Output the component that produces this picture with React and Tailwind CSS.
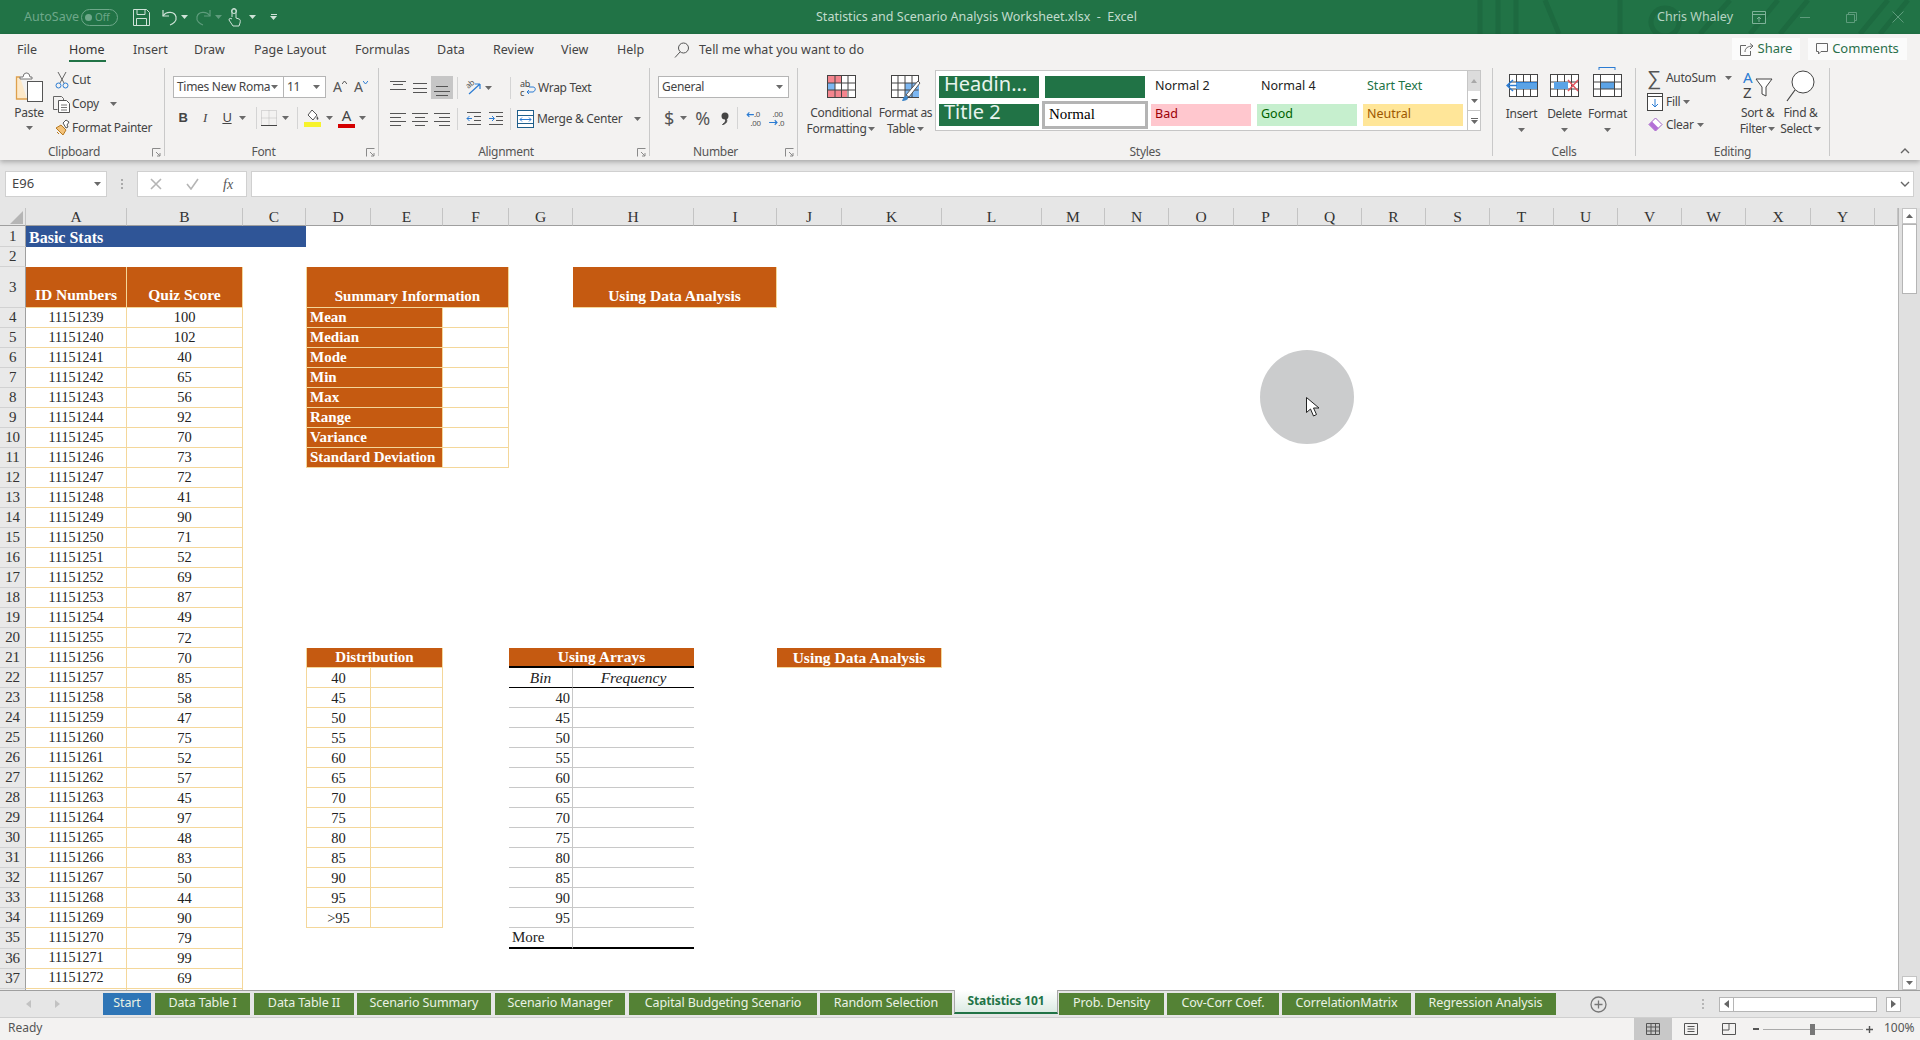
import React from 'react';

const Caret = ({ c = '#6a6a6a' }) => (
  <svg width="7" height="4" viewBox="0 0 7 4" className="shrink-0"><path d="M0 0h7L3.5 4z" fill={c} /></svg>
);
const Launcher = () => (
  <svg width="9" height="9" viewBox="0 0 9 9" className="absolute right-[3px] bottom-[3px]">
    <path d="M.5 8.5v-8h8M4 4l4 4M8 5v3H5" fill="none" stroke="#8a8a8a" />
  </svg>
);
const Sep = () => <div className="w-px h-[88px] mt-[2px] bg-[#c9c9c9] shrink-0" />;
const MiniSep = () => <div className="w-px h-[22px] bg-[#d4d4d4] shrink-0" />;

function Group({ cls, label, launcher, children }) {
  return (
    <div className={`relative flex flex-col shrink-0 ${cls}`}>
      <div className="h-[78px]">{children}</div>
      <div className={`h-[16px] leading-[16px] text-center text-[#555] ${launcher ? 'pr-[16px]' : ''}`}>{label}</div>
      {launcher && <Launcher />}
    </div>
  );
}

const Lines = ({ ys, xs }) => (
  <svg width="18" height="18" viewBox="0 0 18 18">
    {ys.map((y, i) => <path key={i} d={`M${xs[i][0]} ${y + .5}H${xs[i][1]}`} stroke="#555" fill="none" />)}
  </svg>
);

const IconCut = () => (
  <svg width="14" height="17" viewBox="0 0 14 17"><path d="M3 0l6 11M11 0L5 11" stroke="#666" fill="none" /><circle cx="3.5" cy="13.5" r="2.5" fill="none" stroke="#2b7cd3" /><circle cx="10.5" cy="13.5" r="2.5" fill="none" stroke="#2b7cd3" /></svg>
);
const IconCopy = () => (
  <svg width="18" height="18" viewBox="0 0 18 18"><path d="M.5 1.5h8l2 2v2M.5 1.5v13h4" fill="none" stroke="#666" /><path d="M5.5 5.5h8l3 3v9h-11z" fill="#fff" stroke="#555" /><path d="M8 10h6M8 12.5h6M8 15h6" stroke="#777" /></svg>
);
const IconBrush = () => (
  <svg width="18" height="18" viewBox="0 0 18 18"><path d="M8 6l5 5-3 5-7-7z" fill="#f3c27a" stroke="#b7791f" /><path d="M10 4l3-3 3 2-2 3 1 2-2 1z" fill="#fff" stroke="#555" /><path d="M5 11l3 3M4 13l2 2" stroke="#b7791f" /></svg>
);
const IconOrient = () => (
  <svg width="18" height="18" viewBox="0 0 18 18" className="overflow-visible"><text x="1" y="8" fontSize="8" fill="#555" transform="rotate(-40 5 6)">ab</text><path d="M4 15L15 5M15 5h-5M15 5v5" stroke="#2b7cd3" fill="none" strokeWidth="1.2" /></svg>
);
const IconIndent = ({ right }) => (
  <svg width="16" height="16" viewBox="0 0 16 16">
    <path d="M1 1.5h14M8 5.5h7M8 9.5h7M1 13.5h14" stroke="#555" />
    {right ? <path d="M1 7.5h5M4 5l2.5 2.5L4 10" stroke="#2b7cd3" fill="none" /> : <path d="M6 7.5H1M3.5 5L1 7.5 3.5 10" stroke="#2b7cd3" fill="none" />}
  </svg>
);
const IconWrap = () => (
  <svg width="16" height="18" viewBox="0 0 16 18" className="overflow-visible"><text x="0" y="8" fontSize="9" fill="#444" fontFamily="Noto Sans">ab</text><text x="0" y="17" fontSize="9" fill="#444" fontFamily="Noto Sans">c</text><path d="M7 13h6c3-1 3-5 0-5H9M7 13l2-2M7 13l2 2" stroke="#2b7cd3" fill="none" /></svg>
);
const IconMerge = () => (
  <svg width="17" height="18" viewBox="0 0 17 18"><rect x=".5" y=".5" width="16" height="17" fill="#fff" stroke="#1f5f8b" /><path d="M.5 5.5h16M.5 13.5h16" stroke="#1f5f8b" /><path d="M3 9.5h11M3 9.5l2-2M3 9.5l2 2M14 9.5l-2-2M14 9.5l-2 2" stroke="#2b7cd3" fill="none" /></svg>
);
const IconBorders = () => (
  <svg width="16" height="16" viewBox="0 0 16 16"><path d="M.5.5h15v15H.5zM8 .5v15M.5 8h15" stroke="#bbb" fill="none" strokeDasharray="1 1" /><path d="M0 15.5h16" stroke="#444" /></svg>
);
const IconFill = () => (
  <svg width="17" height="18" viewBox="0 0 17 18"><path d="M8 1l5 5-4 5-5-5z" fill="#fff" stroke="#555" /><path d="M13 7c1 1.5 2 2.5 1 3.5s-2-1-1-3.5z" fill="#555" /><rect x="0" y="13" width="17" height="5" fill="#f7f32c" /></svg>
);
const IconGrow = ({ down }) => (
  <div className="flex w-[14px] text-[14px] leading-none text-[#555] shrink-0 items-start">
    A<svg width="5" height="4" viewBox="0 0 5 4" className="mt-[1px]"><path d={down ? 'M0 0l2.5 3L5 0' : 'M0 3l2.5-3L5 3'} fill="none" stroke={down ? '#2b7cd3' : '#555'} /></svg>
  </div>
);
const IconCF = () => (
  <svg width="29" height="23" viewBox="0 0 29 23"><rect x=".5" y=".5" width="28" height="22" fill="#fff" stroke="#444" /><path d="M1 1h13v7H1zM1 15h19v7H1z" fill="#f4858e" /><path d="M1 8h7v7H1z" fill="#7cb7f2" /><path d="M8 .5v22M14.5.5v22M21 .5v22M.5 8h28M.5 15h28" stroke="#444" /></svg>
);
const IconFT = () => (
  <svg width="30" height="30" viewBox="0 0 30 30"><rect x=".5" y=".5" width="27" height="22" fill="#fff" stroke="#444" /><path d="M14 8h14v14H14z" fill="#7cb7f2" /><path d="M7 .5v22M14 .5v22M21 .5v22M.5 8h27M.5 15h27" stroke="#444" /><path d="M27 6l2 2-11 14-3-2z" fill="#fff" stroke="#555" /><path d="M15 21c-2 0-3 2-4 5 3 0 6-1 6-3z" fill="#3f87c9" /></svg>
);
const IconInsert = () => (
  <svg width="32" height="23" viewBox="0 0 32 23"><rect x="3.500" y=".5" width="28" height="22" fill="#fff" stroke="#444" /><path d="M3.500 8h28M3.500 15h28M10.500.5v22M17.500.5v22M24.500.5v22" stroke="#444" /><path d="M10 8h21v7H10z" fill="#5ba3e6" /><path d="M11 11.500H1M7 6L1 11.500 7 17" fill="none" stroke="#2b7cd3" strokeWidth="1.5" /><path d="M10 8.500h21" stroke="#2b7cd3" /></svg>
);
const IconDelete = () => (
  <svg width="29" height="23" viewBox="0 0 29 23"><rect x=".5" y=".5" width="28" height="22" fill="#fff" stroke="#444" /><path d="M.5 8h28M.5 15h28M7.500.5v22M14.500.5v22M21.500.5v22" stroke="#444" /><path d="M4 8h14v7H4z" fill="#5ba3e6" /><path d="M18 6l10 11M28 6L18 17" stroke="#e2505a" strokeWidth="1.4" /></svg>
);
const IconFormat = () => (
  <svg width="29" height="30" viewBox="0 0 29 30"><path d="M6 .5h16M6 0v3M22 0v3" stroke="#2b7cd3" /><g transform="translate(0 7)"><rect x=".5" y=".5" width="28" height="22" fill="#fff" stroke="#444" /><path d="M7 8h14v7H7z" fill="#5ba3e6" /><path d="M.5 8h28M.5 15h28M7.500.5v22M21.500.5v22" stroke="#444" /></g></svg>
);
const IconFillDown = () => (
  <svg width="16" height="18" viewBox="0 0 16 18"><rect x=".5" y=".5" width="15" height="17" fill="#fff" stroke="#444" /><path d="M.5 3.500h15" stroke="#444" /><path d="M8 6v8M5 11l3 3 3-3" stroke="#2b7cd3" fill="none" /></svg>
);
const IconClear = () => (
  <svg width="16" height="16" viewBox="0 0 16 16"><path d="M8.500 1L15 7.500 8.500 14 2 7.500z" fill="#fff" stroke="#a05fc5" /><path d="M5 4.500L11.500 11 8.500 14 2 7.500z" fill="#b36fd6" /></svg>
);
const IconSort = () => (
  <svg width="30" height="30" viewBox="0 0 30 30" className="overflow-visible"><text x="0" y="13" fontSize="15" fill="#2b7cd3" fontFamily="Noto Sans">A</text><text x="0" y="28" fontSize="15" fill="#444" fontFamily="Noto Sans">Z</text><path d="M13 9h16l-6 8v9l-4-2v-7z" fill="#fff" stroke="#444" /></svg>
);
const IconFind = () => (
  <svg width="30" height="32" viewBox="0 0 30 32"><circle cx="17" cy="12" r="11" fill="#fff" stroke="#444" /><path d="M9 20L1 31" stroke="#444" strokeWidth="1.2" /></svg>
);
const IconSearch = ({ s = 16 }) => (
  <svg width={s} height={s} viewBox="0 0 16 16"><circle cx="9.500" cy="6" r="5" fill="none" stroke="#555" /><path d="M6 10l-5 5.500" stroke="#555" /></svg>
);

function Clipboard() {
  return (
    <Group cls="w-[164px]" label="Clipboard" launcher>
      <div className="flex pl-[12px]">
        <div className="w-[34px] flex flex-col items-center pt-[6px]">
          <svg width="28" height="30" viewBox="0 0 28 30"><path d="M5 5H1.500v22H12" fill="#fde9c9" stroke="#dea04c" strokeWidth="1.3" /><path d="M5 5h3l1-3 2-1h1l2 1 1 3h2v2H5z" fill="#fff" stroke="#777" /><rect x="12.500" y="9.500" width="15" height="20" fill="#fff" stroke="#555" /></svg>
          <div className="h-[18px] leading-[18px] mt-[2px]">Paste</div>
          <div className="mt-[4px]"><Caret /></div>
        </div>
        <div className="ml-[7px] pt-[2px] flex flex-col">
          <div className="h-[24px] flex items-center"><div className="w-[19px] pl-[2px]"><IconCut /></div>Cut</div>
          <div className="h-[24px] flex items-center"><div className="w-[19px]"><IconCopy /></div>Copy<div className="ml-[11px]"><Caret /></div></div>
          <div className="h-[24px] flex items-center"><div className="w-[19px]"><IconBrush /></div>Format Painter</div>
        </div>
      </div>
    </Group>
  );
}

function Font() {
  return (
    <Group cls="w-[213px]" label="Font" launcher>
      <div className="flex items-center pl-[8px] pt-[10px]">
        <div className="w-[111px] h-[22px] bg-white border border-[#b5b5b5] flex items-center justify-between pl-[3px] pr-[5px] whitespace-nowrap">Times New Roma<Caret /></div>
        <div className="w-[43px] h-[22px] -ml-px bg-white border border-[#b5b5b5] flex items-center justify-between pl-[3px] pr-[5px]">11<Caret /></div>
        <div className="ml-[7px]"><IconGrow /></div>
        <div className="ml-[7px]"><IconGrow down /></div>
      </div>
      <div className="flex items-center pl-[7px] mt-[8px] h-[24px]">
        <div className="w-[22px] text-center font-bold text-[13px] [font-family:'Liberation_Sans',sans-serif] text-[#444]">B</div>
        <div className="w-[22px] text-center italic text-[13px] [font-family:'Liberation_Serif',serif]">I</div>
        <div className="w-[22px] text-center underline text-[13px]">U</div>
        <div className="ml-[1px]"><Caret /></div>
        <div className="ml-[10px]"><MiniSep /></div>
        <div className="ml-[4px]"><IconBorders /></div>
        <div className="ml-[5px]"><Caret /></div>
        <div className="ml-[8px]"><MiniSep /></div>
        <div className="ml-[6px]"><IconFill /></div>
        <div className="ml-[5px]"><Caret /></div>
        <div className="ml-[5px] w-[17px] flex flex-col items-center leading-none text-[15px]">A<div className="w-[17px] h-[4px] mt-px bg-[#d40000]" /></div>
        <div className="ml-[4px]"><Caret /></div>
      </div>
    </Group>
  );
}

function Alignment() {
  return (
    <Group cls="w-[270px]" label="Alignment" launcher>
      <div className="flex items-center pl-[8px] pt-[10px] h-[33px]">
        <div className="w-[22px] h-[23px] flex items-center justify-center"><Lines ys={[2, 5, 10]} xs={[[1, 17], [4, 14], [1, 17]]} /></div>
        <div className="w-[22px] h-[23px] flex items-center justify-center"><Lines ys={[4, 9, 13]} xs={[[2, 16], [2, 16], [2, 16]]} /></div>
        <div className="w-[22px] h-[23px] flex items-center justify-center bg-[#c6c6c6]"><Lines ys={[7, 12, 16]} xs={[[3, 15], [1, 17], [3, 15]]} /></div>
        <div className="ml-[4px]"><MiniSep /></div>
        <div className="ml-[7px]"><IconOrient /></div>
        <div className="ml-[2px]"><Caret /></div>
        <div className="ml-[18px]"><MiniSep /></div>
        <div className="ml-[9px]"><IconWrap /></div>
        <div className="ml-[2px] whitespace-nowrap">Wrap Text</div>
      </div>
      <div className="flex items-center pl-[8px] mt-[8px] h-[24px]">
        <div className="w-[22px] flex justify-center"><Lines ys={[3, 7, 11, 15]} xs={[[1, 17], [1, 12], [1, 17], [1, 12]]} /></div>
        <div className="w-[22px] flex justify-center"><Lines ys={[3, 7, 11, 15]} xs={[[1, 17], [4, 14], [1, 17], [4, 14]]} /></div>
        <div className="w-[22px] flex justify-center"><Lines ys={[3, 7, 11, 15]} xs={[[1, 17], [6, 17], [1, 17], [6, 17]]} /></div>
        <div className="ml-[4px]"><MiniSep /></div>
        <div className="ml-[8px]"><IconIndent /></div>
        <div className="ml-[6px]"><IconIndent right /></div>
        <div className="ml-[6px]"><MiniSep /></div>
        <div className="ml-[6px]"><IconMerge /></div>
        <div className="ml-[3px] whitespace-nowrap">Merge &amp; Center</div>
        <div className="ml-[12px]"><Caret /></div>
      </div>
    </Group>
  );
}

function NumberGroup() {
  return (
    <Group cls="w-[147px]" label="Number" launcher>
      <div className="pl-[8px] pt-[10px]">
        <div className="w-[131px] h-[22px] bg-white border border-[#b5b5b5] flex items-center justify-between pl-[3px] pr-[5px]">General<Caret /></div>
      </div>
      <div className="flex items-center pl-[12px] mt-[8px] h-[24px] text-[#555]">
        <div className="text-[18px] w-[14px] text-center">$</div>
        <div className="ml-[4px]"><Caret /></div>
        <div className="ml-[6px] text-[18px] w-[19px] text-center">%</div>
        <div className="ml-[6px] w-[14px] flex justify-center">
          <svg width="8" height="13" viewBox="0 0 8 13"><circle cx="4" cy="4" r="3.500" fill="#444" /><path d="M5 6.500C7 9 5 12 1.500 12.500 4 11 5 9.500 4.500 7z" fill="#444" stroke="#444" /></svg>
        </div>
        <div className="ml-[5px]"><MiniSep /></div>
        <div className="ml-[8px]">
          <svg width="18" height="18" viewBox="0 0 16 16"><text x="7" y="7" fontSize="7" fill="#555">.0</text><text x="4" y="15" fontSize="7" fill="#555">.00</text><path d="M7 5H1M3 3L1 5l2 2" stroke="#2b7cd3" fill="none" /></svg>
        </div>
        <div className="ml-[4px]">
          <svg width="18" height="18" viewBox="0 0 16 16"><text x="4" y="7" fontSize="7" fill="#555">.00</text><text x="9" y="15" fontSize="7" fill="#555">.0</text><path d="M1 12h7M6 10l2 2-2 2" stroke="#2b7cd3" fill="none" /></svg>
        </div>
      </div>
    </Group>
  );
}

const StyleCell = ({ cls, children }) => (
  <div className={`h-[22px] w-[100px] flex items-center pl-[4px] overflow-hidden whitespace-nowrap leading-none tracking-normal ${cls}`}>{children}</div>
);

function Styles() {
  return (
    <Group cls="w-[694px]" label="Styles">
      <div className="flex">
        <div className="w-[137px] flex pl-[9px] pt-[9px]">
          <div className="w-[68px] flex flex-col items-center text-center leading-[16px]">
            <div className="mb-[7px]"><IconCF /></div>
            <div className="whitespace-nowrap">Conditional</div>
            <div className="flex items-center gap-[2px] whitespace-nowrap">Formatting<Caret /></div>
          </div>
          <div className="w-[60px] ml-px flex flex-col items-center text-center leading-[16px]">
            <div className="h-[30px]"><IconFT /></div>
            <div className="whitespace-nowrap">Format as</div>
            <div className="flex items-center gap-[2px] whitespace-nowrap">Table<Caret /></div>
          </div>
        </div>
        <div className="mt-[4px] h-[61px] w-[546px] bg-white border border-[#c6c6c6] flex">
          <div className="w-[532px] pl-[3px] pt-[5px] flex flex-col gap-[6px]">
            <div className="flex gap-[6px]">
              <StyleCell cls="bg-[#217346] text-[#e8f3ed] text-[20px] !pl-[5px] pb-[7px]">Headin...</StyleCell>
              <StyleCell cls="bg-[#217346]" />
              <StyleCell cls="text-[#222] text-[12.5px] pb-[1px]">Normal 2</StyleCell>
              <StyleCell cls="text-[#222] text-[12.5px] pb-[1px]">Normal 4</StyleCell>
              <StyleCell cls="text-[#217346] text-[12.5px] pb-[1px]">Start Text</StyleCell>
            </div>
            <div className="flex gap-[6px]">
              <StyleCell cls="bg-[#217346] text-[#e8f3ed] text-[20px] !pl-[5px] pb-[6px]">Title 2</StyleCell>
              <StyleCell cls="bg-white outline-[3px] outline-[#b4b4b4] text-black text-[15px] pb-[1px] [font-family:'Liberation_Serif',serif]">Normal</StyleCell>
              <StyleCell cls="bg-[#ffc7ce] text-[#9c0006] text-[12.5px] pb-[1px]">Bad</StyleCell>
              <StyleCell cls="bg-[#c6efce] text-[#006100] text-[12.5px] pb-[1px]">Good</StyleCell>
              <StyleCell cls="bg-[#ffe699] text-[#9c5700] text-[12.5px] pb-[1px]">Neutral</StyleCell>
            </div>
          </div>
          <div className="w-[13px] flex flex-col border-l border-[#c6c6c6]">
            <div className="h-[20px] bg-[#dcdcdc] flex items-center justify-center"><svg width="6" height="4" viewBox="0 0 6 4"><path d="M0 4l3-4 3 4z" fill="#a8a8a8" /></svg></div>
            <div className="h-[20px] border-b border-[#c6c6c6] flex items-center justify-center"><Caret /></div>
            <div className="h-[19px] flex flex-col items-center justify-center"><div className="w-[7px] h-px bg-[#666] mb-[1px]" /><Caret /></div>
          </div>
        </div>
      </div>
    </Group>
  );
}

const CellBtn = ({ icon, label, cls }) => (
  <div className={`w-[43px] flex flex-col items-center ${cls}`}>
    <div className="h-[30px] flex items-end">{icon}</div>
    <div className="h-[16px] leading-[16px] mt-[9px]">{label}</div>
    <div className="mt-[6px]"><Caret /></div>
  </div>
);

function Cells() {
  return (
    <Group cls="w-[142px]" label="Cells">
      <div className="flex pl-[7px] pt-[1px]">
        <CellBtn label="Insert" icon={<IconInsert />} />
        <CellBtn label="Delete" icon={<IconDelete />} />
        <CellBtn label="Format" icon={<IconFormat />} />
      </div>
    </Group>
  );
}

function Editing() {
  return (
    <Group cls="w-[193px]" label="Editing">
      <div className="flex">
        <div className="w-[100px] pl-[11px] flex flex-col">
          <div className="h-[24px] flex items-center whitespace-nowrap"><div className="w-[19px] text-[20px] leading-none text-[#555]">∑</div>AutoSum<div className="ml-[9px]"><Caret /></div></div>
          <div className="h-[23px] flex items-center"><div className="w-[19px]"><IconFillDown /></div>Fill<div className="ml-[3px]"><Caret /></div></div>
          <div className="h-[23px] flex items-center"><div className="w-[19px]"><IconClear /></div>Clear<div className="ml-[3px]"><Caret /></div></div>
        </div>
        <div className="w-[43px] flex flex-col items-center pt-[4px] leading-[16px]">
          <div className="h-[34px]"><IconSort /></div>
          <div className="mt-[1px] whitespace-nowrap">Sort &amp;</div>
          <div className="flex items-center gap-[2px] whitespace-nowrap">Filter<Caret /></div>
        </div>
        <div className="w-[43px] flex flex-col items-center pt-[4px] leading-[16px]">
          <div className="h-[34px]"><IconFind /></div>
          <div className="mt-[1px] whitespace-nowrap">Find &amp;</div>
          <div className="flex items-center gap-[2px] whitespace-nowrap">Select<Caret /></div>
        </div>
      </div>
    </Group>
  );
}

function TitleBar() {
  return (
    <div className="relative h-[34px] bg-[#217346] flex items-center shrink-0 overflow-hidden">
      <svg width="470" height="34" viewBox="0 0 470 34" className="absolute left-[1450px] top-0" fill="none" stroke="#1d6a40" strokeWidth="5">
        <path d="M30 0v34M48 0v34M66 0v34M95 0l14 34M170 0v34M215 8a14 14 0 1 0 .1 0M250 34l30-34M300 34l28-34M330 34l28-34M410 34l28-34M430 34l28-34" />
      </svg>
      <div className="relative w-[816px] flex items-center h-full pl-[24px] text-[#6ea88a] text-[12.5px]">
        <div className="w-[57px]">AutoSave</div>
        <div className="w-[37px] h-[17px] rounded-full border border-[#6ea88a] flex items-center pl-[3px] text-[10px] gap-[3px]"><div className="w-[7px] h-[7px] rounded-full bg-[#6ea88a]" />Off</div>
        <svg width="17" height="17" viewBox="0 0 17 17" className="ml-[15px]" fill="none" stroke="#cfe3d8"><path d="M.5.5h13l3 3v13H.5z" /><path d="M4 .5v5h8v-5M3.500 16.500v-7h10v7" /></svg>
        <svg width="17" height="17" viewBox="0 0 17 17" className="ml-[11px]" fill="none" stroke="#cfe3d8" strokeWidth="1.2"><path d="M2 1v6h6" /><path d="M2 7c3-5 12-5 13 1 1 4-3 7-6 8" /></svg>
        <div className="ml-[3px]"><Caret c="#cfe3d8" /></div>
        <svg width="17" height="17" viewBox="0 0 17 17" className="ml-[7px]" fill="none" stroke="#5e9c7c" strokeWidth="1.2"><path d="M15 1v6H9" /><path d="M15 7C12 2 3 2 2 8c-1 4 3 7 6 8" /></svg>
        <div className="ml-[3px]"><Caret c="#5e9c7c" /></div>
        <svg width="13" height="19" viewBox="0 0 13 19" className="ml-[6px]" fill="none" stroke="#cfe3d8"><path d="M4 9V3a2 2 0 0 1 4 0v7l3 1c1.500 .5 1.500 2 1 4l-1 3H5l-4-6c0-2 1.500-2 3-1" /><circle cx="6" cy="3" r="2.500" /></svg>
        <div className="ml-[8px]"><Caret c="#cfe3d8" /></div>
        <div className="ml-[14px] flex flex-col items-center gap-[1px]"><div className="w-[6px] h-px bg-[#cfe3d8]" /><Caret c="#cfe3d8" /></div>
      </div>
      <div className="relative w-[841px] text-[#c2dccd] text-[12.5px] whitespace-pre">Statistics and Scenario Analysis Worksheet.xlsx  -  Excel</div>
      <div className="relative flex items-center text-[#b6d3c3] text-[12.5px] whitespace-nowrap">
        Chris Whaley
        <svg width="14" height="13" viewBox="0 0 14 13" className="ml-[19px]" fill="none" stroke="#7fb299"><path d="M.5.5h13v12H.5zM.5 3.500h13M7 11V6M5 8l2-2 2 2" /></svg>
        <div className="ml-[34px] w-[10px] h-px bg-[#5e9c7c]" />
        <svg width="11" height="11" viewBox="0 0 11 11" className="ml-[36px]" fill="none" stroke="#5e9c7c"><path d="M.5 2.500h8v8h-8zM2.500 2.500v-2h8v8h-2" /></svg>
        <svg width="12" height="12" viewBox="0 0 12 12" className="ml-[35px]" fill="none" stroke="#5e9c7c"><path d="M.5.5l11 11M11.500.5l-11 11" /></svg>
      </div>
    </div>
  );
}

function MenuRow() {
  return (
    <div className="h-[32px] flex items-start pt-[7px] pl-[17px] text-[12.5px] tracking-normal text-[#444] shrink-0">
      <div className="w-[52px] leading-[18px]">File</div>
      <div className="w-[64px]"><div className="w-[37px] leading-[18px] pb-[1px] border-b-2 border-[#217346] text-[#333]">Home</div></div>
      <div className="w-[61px] leading-[18px]">Insert</div>
      <div className="w-[60px] leading-[18px]">Draw</div>
      <div className="w-[101px] leading-[18px]">Page Layout</div>
      <div className="w-[82px] leading-[18px]">Formulas</div>
      <div className="w-[56px] leading-[18px]">Data</div>
      <div className="w-[68px] leading-[18px]">Review</div>
      <div className="w-[56px] leading-[18px]">View</div>
      <div className="w-[57px] leading-[18px]">Help</div>
      <div className="w-[25px] h-[18px] flex items-center"><IconSearch /></div>
      <div className="leading-[18px] whitespace-nowrap">Tell me what you want to do</div>
      <div className="ml-auto flex mr-[13px] -mt-[3px] gap-[8px] text-[13px] text-[#217346]">
        <div className="w-[68px] h-[22px] bg-[#fbfbfb] flex items-center justify-center gap-[4px] text-[#2a6f4b]">
          <svg width="14" height="13" viewBox="0 0 14 13" fill="none" stroke="#666"><path d="M6 2.500H.5v10h10V8M5 9c0-4 3-6 8-6M10 .5L13 3l-3 3" /></svg>Share
        </div>
        <div className="w-[99px] h-[22px] bg-[#fbfbfb] flex items-center justify-center gap-[4px] text-[#2a6f4b]">
          <svg width="12" height="12" viewBox="0 0 12 12" fill="none" stroke="#666"><path d="M.5.5h11v8H5L2.500 11V8.500h-2z" /></svg>Comments
        </div>
      </div>
    </div>
  );
}

function Ribbon() {
  return (
    <div className="relative z-10 bg-[#f3f2f1] shadow-[0_2px_5px_rgba(0,0,0,0.28)] shrink-0 h-[126px] text-[12px] tracking-[-0.3px] text-[#444]">
      <MenuRow />
      <div className="flex h-[94px] relative">
        <Clipboard /><Sep />
        <Font /><Sep />
        <Alignment /><Sep />
        <NumberGroup /><Sep />
        <Styles /><Sep />
        <Cells /><Sep />
        <Editing /><Sep />
        <svg width="10" height="6" viewBox="0 0 10 6" className="absolute right-[10px] bottom-[6px]" fill="none" stroke="#666" strokeWidth="1.4"><path d="M1 5l4-4 4 4" /></svg>
      </div>
    </div>
  );
}

function FormulaBar() {
  return (
    <div className="h-[48px] bg-[#e6e6e6] flex items-start pt-[11px] pl-[5px] shrink-0 text-[13px] text-[#444]">
      <div className="w-[102px] h-[26px] bg-white border border-[#d0d0d0] flex items-center justify-between pl-[6px] pr-[5px]">E96<Caret /></div>
      <div className="w-[30px] h-[26px] flex flex-col items-center justify-center gap-[2px]">
        <div className="w-[2px] h-[2px] bg-[#aaa]" /><div className="w-[2px] h-[2px] bg-[#aaa]" /><div className="w-[2px] h-[2px] bg-[#aaa]" />
      </div>
      <div className="w-[110px] h-[26px] bg-white border border-[#d0d0d0] flex items-center pl-[12px]">
        <svg width="12" height="12" viewBox="0 0 12 12" stroke="#b5b5b5" strokeWidth="1.6" fill="none"><path d="M1 1l10 10M11 1L1 11" /></svg>
        <svg width="13" height="12" viewBox="0 0 13 12" stroke="#b5b5b5" strokeWidth="1.6" fill="none" className="ml-[24px]"><path d="M1 6l4 5 7-10" /></svg>
        <div className="ml-[24px] italic text-[14px] [font-family:'Liberation_Serif',serif] text-[#555]">fx</div>
      </div>
      <div className="ml-[4px] w-[1663px] h-[26px] bg-white border border-[#d0d0d0] flex items-center justify-end pr-[3px]">
        <svg width="10" height="6" viewBox="0 0 10 6" fill="none" stroke="#666" strokeWidth="1.4"><path d="M1 1l4 4 4-4" /></svg>
      </div>
    </div>
  );
}

const COLS = ['', 'A', 'B', 'C', 'D', 'E', 'F', 'G', 'H', 'I', 'J', 'K', 'L', 'M', 'N', 'O', 'P', 'Q', 'R', 'S', 'T', 'U', 'V', 'W', 'X', 'Y', ''];
const SCORES = [100, 102, 40, 65, 56, 92, 70, 73, 72, 41, 90, 71, 52, 69, 87, 49, 72, 70, 85, 58, 47, 75, 52, 57, 45, 97, 48, 83, 50, 44, 90, 79, 99, 69];
const LABELS = ['Mean', 'Median', 'Mode', 'Min', 'Max', 'Range', 'Variance', 'Standard Deviation'];
const DIST = ['40', '45', '50', '55', '60', '65', '70', '75', '80', '85', '90', '95', '>95'];
const BINS = ['40', '45', '50', '55', '60', '65', '70', '75', '80', '85', '90', '95'];

const GOLD = 'border-r border-b border-[#f4d79a]';
const C = {
  blue: 'col-span-3 bg-[#2f5597] text-white font-bold text-[16px] items-center pl-[3px] pt-[2px]',
  hdr: `bg-[#c55a11] text-white font-bold text-[15.5px] items-end justify-center pb-[5px] ${GOLD}`,
  hdr3: `col-span-3 bg-[#c55a11] text-white font-bold text-[15px] items-end justify-center pb-[3px] border-l ${GOLD}`,
  hdr2top: `col-span-2 bg-[#c55a11] text-white font-bold text-[15.5px] items-end justify-center pb-[4px] ${GOLD}`,
  idc: `items-center justify-center ${GOLD}`,
  idcL: `items-center justify-center text-[14.500px] border-l ${GOLD}`,
  num14: `items-center justify-center text-[14.500px] ${GOLD}`,
  label: `col-span-2 bg-[#c55a11] text-white font-bold text-[15px] items-center pl-[3px] border-l ${GOLD}`,
  gold: GOLD,
  title: `col-span-2 bg-[#c55a11] text-white font-bold text-[15px] items-center justify-center border-l ${GOLD}`,
  title2: `col-span-2 bg-[#c55a11] text-white font-bold text-[15.5px] items-center justify-center pb-[1px] ${GOLD}`,
  arr: 'col-span-2 bg-[#c55a11] text-white font-bold text-[15.5px] items-center justify-center pb-[1px] border-b-2 border-black',
  bin: 'italic text-[15.5px] items-center justify-center border-r border-[#c8c8c8] border-b border-b-black',
  freq: 'italic text-[15.5px] items-center justify-center border-b border-black',
  num: 'items-center justify-end pr-[2px] text-[14.500px] pt-px border-r border-b border-[#c8c8c8]',
  numE: 'border-b border-[#c8c8c8]',
  more: 'items-center pl-[3px] text-[15px] pt-px border-r border-[#c8c8c8] border-b-2 border-b-black',
  moreE: 'border-b-2 border-black',
};

function buildCells() {
  const m = {};
  const put = (r, c, cls, text = '', span = 1) => { m[`${r}:${c}`] = { cls, text, span }; };
  put(1, 0, C.blue, 'Basic Stats', 3);
  put(3, 0, C.hdr, 'ID Numbers');
  put(3, 1, C.hdr, 'Quiz Score');
  put(3, 3, C.hdr3, 'Summary Information', 3);
  put(3, 7, C.hdr2top, 'Using Data Analysis', 2);
  for (let r = 4; r <= 38; r++) {
    const s = SCORES[r - 4];
    put(r, 0, C.idc, s === undefined ? '' : String(11151235 + r));
    put(r, 1, C.num14, s === undefined ? '' : String(s));
  }
  LABELS.forEach((l, i) => { put(4 + i, 3, C.label, l, 2); put(4 + i, 5, C.gold); });
  put(21, 3, C.title, 'Distribution', 2);
  DIST.forEach((d, i) => { put(22 + i, 3, C.idcL, d); put(22 + i, 4, C.gold); });
  put(21, 6, C.arr, 'Using Arrays', 2);
  put(22, 6, C.bin, 'Bin');
  put(22, 7, C.freq, 'Frequency');
  BINS.forEach((b, i) => { put(23 + i, 6, C.num, b); put(23 + i, 7, C.numE); });
  put(35, 6, C.more, 'More');
  put(35, 7, C.moreE);
  put(21, 9, C.title2, 'Using Data Analysis', 2);
  return m;
}

function Sheet() {
  const m = buildCells();
  const out = [];
  COLS.forEach((h, i) => {
    out.push(
      <div key={`h${i}`} className="flex items-center justify-center bg-[#e6e6e6] border-r border-b border-r-[#c4c4c4] border-b-[#9f9f9f] text-[#333] text-[15.5px]">
        {i === 0 ? <svg width="13" height="13" viewBox="0 0 13 13" className="ml-[8px] mt-[2px]"><path d="M13 0v13H0z" fill="#b5b5b5" /></svg> : h}
      </div>
    );
  });
  for (let r = 1; r <= 38; r++) {
    out.push(
      <div key={`r${r}`} className="flex items-center justify-center bg-[#e9e9e9] border-r border-b border-r-[#9f9f9f] border-b-[#d2d2d2] text-[#333] text-[15px] tracking-[-0.3px]">{r <= 37 ? r : ''}</div>
    );
    let c = 0;
    while (c < 26) {
      const d = m[`${r}:${c}`];
      if (d) {
        out.push(<div key={`${r}-${c}`} className={`flex min-w-0 overflow-hidden whitespace-nowrap ${d.cls}`}>{d.text}</div>);
        c += d.span;
      } else {
        out.push(<div key={`${r}-${c}`} />);
        c += 1;
      }
    }
  }
  return (
    <div className="flex h-[782px] shrink-0">
      <div className="relative w-[1898px] h-[782px] overflow-hidden bg-white">
        <div className="grid grid-cols-[26px_101px_116px_63px_65px_72px_66px_64px_121px_83px_65px_100px_100px_63px_64px_65px_64px_64px_64px_64px_64px_64px_64px_64px_65px_64px_23px] grid-rows-[18px_21px_20px_41px_repeat(35,20.03px)] [font-family:'Liberation_Serif',serif] text-[14px] leading-none text-[#222]">
          {out}
        </div>
        <div className="absolute left-[1260px] top-[142px] w-[94px] h-[94px] rounded-full bg-[#cbcccd] blur-[0.6px]" />
        <svg width="14" height="20" viewBox="0 0 14 20" className="absolute left-[1306px] top-[189px]"><path d="M.5.5v15l4-3.500 3 7 3-1.500-3-6.500h5.500z" fill="#fff" stroke="#222" /></svg>
      </div>
      <div className="w-[22px] bg-[#e0e0e0] border-l border-[#b5b5b5] flex flex-col items-start pl-[3px]">
        <div className="w-[15px] h-[16px] bg-white border border-[#c4c4c4] flex items-center justify-center"><svg width="7" height="4" viewBox="0 0 7 4"><path d="M0 4l3.500-4L7 4z" fill="#666" /></svg></div>
        <div className="w-[15px] h-[70px] bg-white border border-[#b5b5b5]" />
        <div className="w-[15px] h-[14px] mt-auto bg-white border border-[#c4c4c4] flex items-center justify-center"><Caret /></div>
      </div>
    </div>
  );
}

const TABS = [
  { t: 'Start', c: 'w-[48px] ml-0 bg-[#2e75b6]' },
  { t: 'Data Table I', c: 'w-[95px] ml-[4px] bg-[#548235]' },
  { t: 'Data Table II', c: 'w-[100px] ml-[4px] bg-[#548235]' },
  { t: 'Scenario Summary', c: 'w-[134px] ml-[3px] bg-[#548235]' },
  { t: 'Scenario Manager', c: 'w-[130px] ml-[4px] bg-[#548235]' },
  { t: 'Capital Budgeting Scenario', c: 'w-[188px] ml-[4px] bg-[#548235]' },
  { t: 'Random Selection', c: 'w-[132px] ml-[3px] bg-[#548235]' },
  { t: 'Statistics 101', active: true },
  { t: 'Prob. Density', c: 'w-[105px] ml-px bg-[#548235]' },
  { t: 'Cov-Corr Coef.', c: 'w-[112px] ml-[3px] bg-[#548235]' },
  { t: 'CorrelationMatrix', c: 'w-[129px] ml-[3px] bg-[#548235]' },
  { t: 'Regression Analysis', c: 'w-[141px] ml-[4px] bg-[#548235]' },
];

function TabBar() {
  return (
    <div className="h-[28px] bg-[#e6e6e6] border-t border-b border-t-[#9f9f9f] border-b-[#cfcfcf] flex shrink-0 text-[12.5px] tracking-[-0.1px] items-start">
      <div className="w-[103px] h-[26px] flex items-center pl-[26px] gap-[24px]">
        <svg width="5" height="8" viewBox="0 0 5 8"><path d="M5 0v8L0 4z" fill="#c2c2c2" /></svg>
        <svg width="5" height="8" viewBox="0 0 5 8"><path d="M0 0v8l5-4z" fill="#c2c2c2" /></svg>
      </div>
      {TABS.map(t => t.active ? (
        <div key={t.t} className="w-[104px] ml-[2px] h-[24px] -mt-[1px] flex items-center justify-center pb-[1px] font-bold text-[12px] text-[#217346] bg-gradient-to-b from-white to-[#dcebe3] border-b-2 border-[#217346] border-x border-x-[#a8a8a8] whitespace-nowrap">{t.t}</div>
      ) : (
        <div key={t.t} className={`h-[22px] mt-[2px] flex items-center justify-center pb-[2px] text-[#eaf2e4] whitespace-nowrap ${t.c}`}>{t.t}</div>
      ))}
      <div className="ml-[34px] h-[26px] flex items-center">
        <svg width="17" height="17" viewBox="0 0 17 17" fill="none" stroke="#777" strokeWidth="1.3"><circle cx="8.500" cy="8.500" r="7.500" /><path d="M8.500 4.500v8M4.500 8.500h8" /></svg>
      </div>
      <div className="ml-[95px] h-[26px] flex flex-col items-center justify-center gap-[2px]">
        <div className="w-[2px] h-[2px] bg-[#b5b5b5]" /><div className="w-[2px] h-[2px] bg-[#b5b5b5]" /><div className="w-[2px] h-[2px] bg-[#b5b5b5]" />
      </div>
      <div className="ml-[15px] h-[26px] flex items-center">
        <div className="w-[15px] h-[15px] bg-white border border-[#b5b5b5] flex items-center justify-center"><svg width="5" height="8" viewBox="0 0 5 8"><path d="M5 0v8L0 4z" fill="#666" /></svg></div>
        <div className="w-[143px] h-[15px] bg-white border border-[#b5b5b5] border-l-0" />
        <div className="ml-[9px] w-[15px] h-[15px] bg-white border border-[#b5b5b5] flex items-center justify-center"><svg width="5" height="8" viewBox="0 0 5 8"><path d="M0 0v8l5-4z" fill="#666" /></svg></div>
      </div>
    </div>
  );
}

function StatusBar() {
  return (
    <div className="h-[22px] bg-[#f3f2f1] flex items-center shrink-0 text-[12px] text-[#555]">
      <div className="pl-[8px] pb-[2px] w-[1634px]">Ready</div>
      <div className="w-[38px] h-[22px] bg-[#c8c8c8] flex items-center justify-center">
        <svg width="14" height="12" viewBox="0 0 14 12" fill="none" stroke="#555"><path d="M.5.500h13v11H.5zM.5 4h13M.5 8h13M5 .5v11M9.500 .5v11" /></svg>
      </div>
      <div className="w-[38px] flex justify-center">
        <svg width="14" height="12" viewBox="0 0 14 12" fill="none" stroke="#555"><path d="M.5.500h13v11H.5zM3.500 3.500h7M3.500 6h7M3.500 8.500h7" /></svg>
      </div>
      <div className="w-[38px] flex justify-center">
        <svg width="14" height="12" viewBox="0 0 14 12" fill="none" stroke="#555"><path d="M.5.500h13v11H.5zM.5 7h6.500V.5" /></svg>
      </div>
      <div className="ml-[5px] w-[6px] h-[2px] bg-[#555]" />
      <div className="relative ml-[4px] w-[100px] h-px bg-[#aaa]">
        <div className="absolute left-[47px] -top-[5px] w-[5px] h-[11px] bg-[#777]" />
      </div>
      <svg width="7" height="7" viewBox="0 0 7 7" className="ml-[3px]" stroke="#555" strokeWidth="1.4"><path d="M3.500 0v7M0 3.500h7" /></svg>
      <div className="ml-[11px] pb-[2px] whitespace-nowrap">100%</div>
    </div>
  );
}

export default function App() {
  return (
    <div className="relative w-[1920px] h-[1040px] overflow-hidden flex flex-col bg-white [font-family:'Noto_Sans',sans-serif]">
      <TitleBar />
      <Ribbon />
      <FormulaBar />
      <Sheet />
      <TabBar />
      <StatusBar />
    </div>
  );
}
